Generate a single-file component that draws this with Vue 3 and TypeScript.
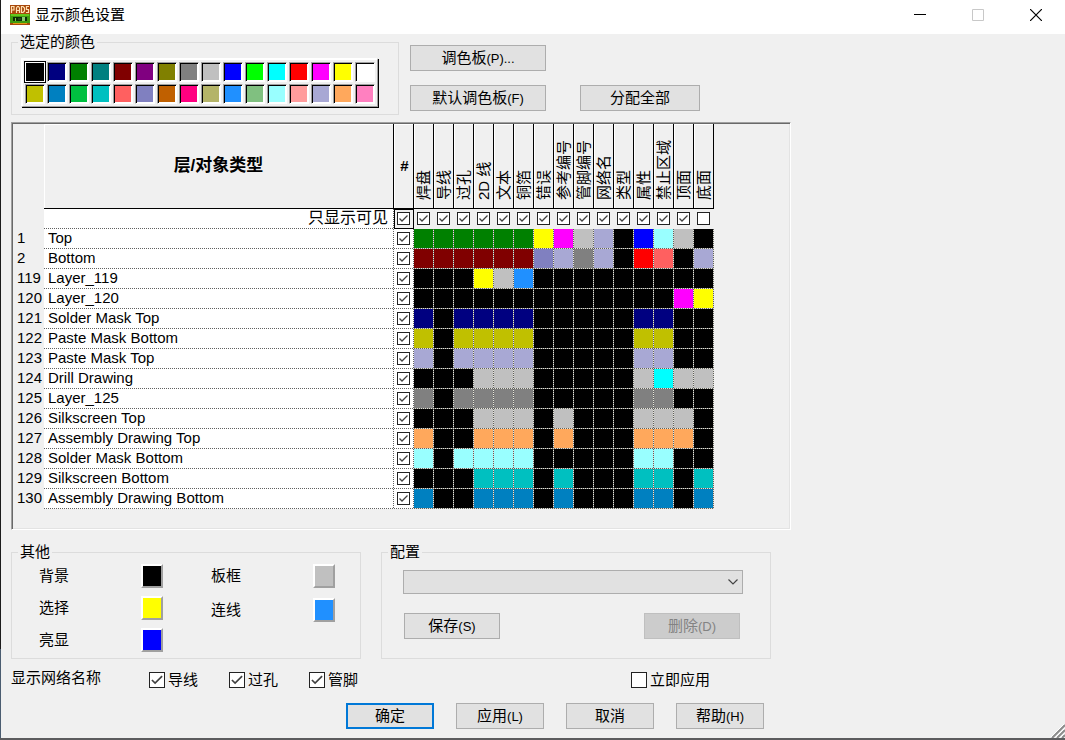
<script setup lang="ts">
import { ref } from 'vue'

const palette: string[] = [
  '#000000', '#000080', '#008000', '#008080', '#800000', '#800080', '#808000', '#808080',
  '#c0c0c0', '#0000ff', '#00ff00', '#00ffff', '#ff0000', '#ff00ff', '#ffff00', '#ffffff',
  '#c0c000', '#0080c0', '#00c040', '#00c0c0', '#ff6060', '#8080c0', '#c06000', '#ff0080',
  '#b4b468', '#2090ff', '#80c080', '#99ffff', '#ff9c9c', '#a8a8d4', '#ffa85c', '#ff80c0',
]
const selected = ref(0)

const columns: string[] = [
  '焊盘', '导线', '过孔', '2D 线', '文本', '铜箔', '错误', '参考编号',
  '管脚编号', '网络名', '类型', '属性', '禁止区域', '顶面', '底面',
]
const columnVisible = ref<boolean[]>(columns.map((_, i) => i < columns.length - 1))
const allVisible = ref(true)

const codes: Record<string, string> = {
  k: '#000000', g: '#008000', m: '#800000', y: '#ffff00', f: '#ff00ff', s: '#c0c0c0',
  l: '#a8a8d4', b: '#0000ff', c: '#99ffff', p: '#8080c0', d: '#808080', r: '#ff0000',
  e: '#ff6060', u: '#2090ff', n: '#000080', o: '#c0c000', a: '#00ffff', w: '#ffa85c',
  t: '#00c0c0', z: '#0080c0',
}

interface Layer {
  id: number
  name: string
  colors: string
  visible: boolean
}

const layers = ref<Layer[]>([
  { id: 1, name: 'Top', colors: 'ggggggyfslkbcsk', visible: true },
  { id: 2, name: 'Bottom', colors: 'mmmmmmpldlkrekl', visible: true },
  { id: 119, name: 'Layer_119', colors: 'kkkysukkkkkkkkk', visible: true },
  { id: 120, name: 'Layer_120', colors: 'kkkkkkkkkkkkkfy', visible: true },
  { id: 121, name: 'Solder Mask Top', colors: 'nknnnnkkkkknnkk', visible: true },
  { id: 122, name: 'Paste Mask Bottom', colors: 'okooookkkkkookk', visible: true },
  { id: 123, name: 'Paste Mask Top', colors: 'lkllllkkkkkllkk', visible: true },
  { id: 124, name: 'Drill Drawing', colors: 'kkkssskkkkksass', visible: true },
  { id: 125, name: 'Layer_125', colors: 'dkddddkkkkkddkk', visible: true },
  { id: 126, name: 'Silkscreen Top', colors: 'kkkssskskkksssk', visible: true },
  { id: 127, name: 'Assembly Drawing Top', colors: 'wkkwwwkwkkkwwwk', visible: true },
  { id: 128, name: 'Solder Mask Bottom', colors: 'ckcccckkkkkcckk', visible: true },
  { id: 129, name: 'Silkscreen Bottom', colors: 'kkktttktkkkttkt', visible: true },
  { id: 130, name: 'Assembly Drawing Bottom', colors: 'zkkzzzkzkkkzzkz', visible: true },
])

const others = [
  [
    { label: '背景', color: '#000000' },
    { label: '选择', color: '#ffff00' },
    { label: '亮显', color: '#0000ff' },
  ],
  [
    { label: '板框', color: '#c0c0c0' },
    { label: '连线', color: '#2090ff' },
  ],
]

const netNames = ref([
  { label: '导线', on: true },
  { label: '过孔', on: true },
  { label: '管脚', on: true },
])
const applyNow = ref(false)
</script>

<template>
  <div class="window">
    <header class="titlebar">
      <svg class="logo" width="20" height="20" viewBox="0 0 20 20" aria-hidden="true">
        <rect width="20" height="20" fill="#a8480c" />
        <rect y="9" width="20" height="9" fill="#3f9a10" />
        <rect x="1" y="9" width="18" height="2" fill="#63c81c" />
        <path d="M1.500 8V1.500h2.500v3.500h-2.500M6.500 8V3l1-1.500h1L9.500 3v5M6.500 5.500h3M11.500 1.500h1.500l1.500 1.500v3L13 7.500h-1.500zM19 1.500h-2.500V4.500H18.500v3h-2.500" fill="none" stroke="#ffe0b0" stroke-width="1.200" />
        <rect x="3" y="12" width="14" height="4" fill="#0c2c08" />
        <rect x="5" y="13" width="1" height="3" fill="#7fd040" />
        <rect x="8" y="13" width="3" height="2" fill="#244818" />
        <rect x="12" y="12" width="3" height="4" fill="#8ccc70" />
        <rect x="3" y="18" width="14" height="1" fill="#e09a10" />
      </svg>
      <h1>显示颜色设置</h1>
      <button class="caption" type="button" aria-label="最小化">
        <svg width="12" height="12" viewBox="0 0 12 12"><path d="M0 5.500h12" stroke="#000" /></svg>
      </button>
      <button class="caption" type="button" aria-label="最大化" disabled>
        <svg width="12" height="12" viewBox="0 0 12 12"><path d="M.5.5h11v11H.5z" fill="none" stroke="#c8c8c8" /></svg>
      </button>
      <button class="caption" type="button" aria-label="关闭">
        <svg width="12" height="12" viewBox="0 0 12 12"><path d="M0 0l12 12M12 0L0 12" stroke="#000" stroke-width="1.200" /></svg>
      </button>
    </header>

    <main>
      <section class="top">
        <fieldset class="group colors">
          <legend>选定的颜色</legend>
          <div class="palette">
            <button
              v-for="(c, i) in palette"
              :key="i"
              type="button"
              class="chip"
              :class="{ active: i === selected }"
              :style="{ backgroundColor: c }"
              :aria-label="c"
              :aria-pressed="i === selected"
              @click="selected = i"
            ></button>
          </div>
        </fieldset>
        <div class="top-actions">
          <button class="btn" type="button">调色板<span class="key">(P)...</span></button>
          <button class="btn second" type="button">默认调色板<span class="key">(F)</span></button>
          <button class="btn second" type="button">分配全部</button>
        </div>
      </section>

      <section class="sheet">
        <table>
          <colgroup>
            <col class="c-id" />
            <col class="c-name" />
            <col v-for="n in 16" :key="n" class="c-cell" />
          </colgroup>
          <thead>
            <tr>
              <td></td>
              <th scope="col" class="title">层/对象类型</th>
              <th scope="col" class="title hash">#</th>
              <th v-for="c in columns" :key="c" scope="col"><span class="turned">{{ c }}</span></th>
            </tr>
          </thead>
          <tbody>
            <tr>
              <td></td>
              <td class="name only">只显示可见</td>
              <td class="check focus"><input v-model="allVisible" type="checkbox" aria-label="只显示可见" /></td>
              <td v-for="(c, i) in columns" :key="c" class="check plain">
                <input v-model="columnVisible[i]" type="checkbox" :aria-label="c" />
              </td>
            </tr>
            <tr v-for="layer in layers" :key="layer.id">
              <th scope="row" class="id">{{ layer.id }}</th>
              <td class="name">{{ layer.name }}</td>
              <td class="check"><input v-model="layer.visible" type="checkbox" :aria-label="layer.name" /></td>
              <td
                v-for="(k, i) in layer.colors"
                :key="i"
                class="cell"
                :style="{ backgroundColor: codes[k] }"
              ></td>
            </tr>
          </tbody>
        </table>
      </section>

      <section class="groups">
        <fieldset class="group">
          <legend>其他</legend>
          <div class="other-columns">
            <div v-for="(col, n) in others" :key="n" class="other-list">
              <label v-for="o in col" :key="o.label" class="other">
                <span>{{ o.label }}</span>
                <button type="button" class="well" :style="{ backgroundColor: o.color }"></button>
              </label>
            </div>
          </div>
        </fieldset>

        <fieldset class="group">
          <legend>配置</legend>
          <div class="config">
            <div class="combo">
              <select aria-label="配置" disabled><option></option></select>
              <svg width="10" height="6" viewBox="0 0 10 6" aria-hidden="true"><path d="M.5.5L5 5 9.500.5" fill="none" stroke="#444" stroke-width="1.200" /></svg>
            </div>
            <div class="config-actions">
              <button class="btn" type="button">保存<span class="key">(S)</span></button>
              <button class="btn" type="button" disabled>删除<span class="key">(D)</span></button>
            </div>
          </div>
        </fieldset>
      </section>

      <section class="options">
        <span class="caption-text">显示网络名称</span>
        <label v-for="n in netNames" :key="n.label" class="option">
          <input v-model="n.on" type="checkbox" />{{ n.label }}
        </label>
        <label class="option now"><input v-model="applyNow" type="checkbox" />立即应用</label>
      </section>

      <footer>
        <button class="btn default" type="button">确定</button>
        <button class="btn" type="button">应用<span class="key">(L)</span></button>
        <button class="btn" type="button">取消</button>
        <button class="btn" type="button">帮助<span class="key">(H)</span></button>
      </footer>
    </main>
    <svg class="grip" width="14" height="14" viewBox="0 0 14 14" aria-hidden="true">
      <path d="M1 14L14 1M6 14l8-8M11 14l3-3" stroke="#8c8c8c" stroke-width="2" />
      <path d="M0 13L13 0M4.500 13.500l9-9M9.500 13.500l4-4" stroke="#fff" />
    </svg>
  </div>
</template>

<style>
body {
  margin: 0;
  background: #f0f0f0;
}
</style>

<style scoped>
.window {
  position: relative;
  box-sizing: border-box;
  min-height: 100vh;
  padding-left: 1px;
  border-bottom: 2px solid #5c5c5e;
  background: linear-gradient(#1c1c1c 0 88%, #4a5c70 88%) 0 0 / 1px 100% no-repeat #f0f0f0;
  color: #000;
  font: 15px/16px "Liberation Sans", "Noto Sans CJK SC", sans-serif;
}

button,
select,
input {
  margin: 0;
  font: inherit;
  color: inherit;
}

.titlebar {
  display: flex;
  align-items: center;
  height: 34px;
  padding-left: 9px;
  box-sizing: border-box;
  background: #fff;
}

.titlebar h1 {
  flex: 1;
  margin: 0 0 4px 5px;
  font-size: 15px;
  font-weight: 400;
}

.logo {
  margin-bottom: 4px;
}

.caption {
  display: grid;
  place-items: center;
  width: 58px;
  height: 30px;
  margin-bottom: 4px;
  padding: 0;
  border: 0;
  background: none;
}

main {
  padding: 0 10px 9px;
}

.group {
  box-sizing: border-box;
  min-width: 0;
  margin: 0;
  padding: 0;
  border: 1px solid #dcdcdc;
}

.group legend {
  height: 16px;
  margin-left: 6px;
  padding: 0 2px;
}

.top {
  display: flex;
  gap: 11px;
}

.palette {
  display: grid;
  grid-template-columns: repeat(16, 20px);
  gap: 2px;
  margin: 8px 20px 7px 9px;
  padding: 2px;
  border: 2px solid;
  border-color: #fff #a0a0a0 #a0a0a0 #fff;
  border-right-width: 1px;
  border-bottom-width: 1px;
  box-shadow: 1px 1px #000;
}

.chip {
  width: 20px;
  height: 20px;
  padding: 0;
  border: 1px solid;
  border-color: #a0a0a0 #fff #fff #a0a0a0;
  box-shadow: inset 1px 1px #000, inset -1px -1px #fff;
}

.chip.active {
  border-color: #fff;
  box-shadow: none;
  outline: 1px solid #000;
}

.top-actions {
  display: grid;
  grid-template-columns: 136px 120px;
  grid-auto-rows: 26px;
  gap: 14px 34px;
  padding-top: 11px;
}

.top-actions .second {
  grid-row: 2;
}

.btn {
  height: 26px;
  padding: 0;
  border: 1px solid #adadad;
  background: #e1e1e1;
  text-align: center;
}

.btn:disabled {
  border-color: #bfbfbf;
  background: #ccc;
  color: #838383;
}

.btn.default {
  border: 2px solid #0078d7;
}

.key {
  font-size: 13px;
}

.sheet {
  margin: 7px 264px 0 0;
  padding: 1px 1px 20px;
  border: 1px solid;
  border-color: #a0a0a0 #fff #fff #a0a0a0;
  box-shadow: inset 1px 1px #696969, inset -1px -1px #e3e3e3;
}

table {
  table-layout: fixed;
  width: 701px;
  border-spacing: 0;
}

.c-id {
  width: 31px;
}

.c-name {
  width: 350px;
}

.c-cell {
  width: 20px;
}

th,
td {
  box-sizing: border-box;
  padding: 0;
}

thead th {
  height: 85px;
  border-right: 1px solid #000;
  border-bottom: 1px solid #000;
  box-shadow: inset 1px 1px #fff;
  font-weight: 400;
  vertical-align: bottom;
}

thead .title {
  font-size: 17px;
  font-weight: 700;
  vertical-align: middle;
}

thead .hash {
  padding-left: 2px;
  font-size: 15px;
}

.turned {
  display: block;
  height: 76px;
  margin: 0 auto 8px;
  line-height: 18px;
  text-align: left;
  writing-mode: vertical-rl;
  text-orientation: sideways;
  transform: rotate(180deg);
  white-space: nowrap;
}

tbody tr {
  height: 20px;
}

.id {
  padding: 0 0 2px 4px;
  font-weight: 400;
  text-align: left;
}

.name,
.check,
.cell {
  --a: #606060;
  --b: #fff;
  height: 20px;
  background-color: #fff;
  background-image:
    repeating-linear-gradient(90deg, var(--a) 0 1px, var(--b) 1px 2px),
    repeating-linear-gradient(var(--a) 0 1px, var(--b) 1px 2px);
  background-position: 0 100%, 100% 0;
  background-size: 100% 1px, 1px 100%;
  background-repeat: no-repeat;
}

.cell {
  --b: #e4e4d8;
}

.name {
  padding: 0 0 2px 4px;
  white-space: nowrap;
}

.name.only {
  padding-right: 6px;
  font-size: 16px;
  text-align: right;
}

.check {
  padding: 3px 4px 4px 3px;
}

.check.plain {
  background: #f0f0f0;
}

.check.focus {
  box-shadow: inset 0 0 0 1px #000;
  background: #f0f0f0;
}

input[type="checkbox"] {
  display: block;
  appearance: none;
  box-sizing: border-box;
  width: 13px;
  height: 13px;
  border: 1px solid #222;
  background: #fff center / 11px 11px no-repeat;
}

input[type="checkbox"]:checked {
  background-image: url("data:image/svg+xml,%3Csvg xmlns='http://www.w3.org/2000/svg' viewBox='0 0 11 11'%3E%3Cpath d='M1.500 5.500L4 8l5.500-5.500' fill='none' stroke='%23404040' stroke-width='1.300'/%3E%3C/svg%3E");
}

.groups {
  display: grid;
  grid-template-columns: 350fr 390fr;
  gap: 20px;
  margin: 14px 284px 0 0;
}

.other-columns {
  display: flex;
  justify-content: space-between;
  padding: 4px 25px 6px 27px;
}

.other-list {
  display: flex;
  flex-direction: column;
  gap: 8px;
  width: 124px;
}

.other-list + .other-list {
  gap: 10px;
}

.other {
  display: flex;
  justify-content: space-between;
  line-height: 24px;
}

.well {
  width: 22px;
  height: 24px;
  padding: 0;
  border: 2px solid;
  border-color: #fff #a0a0a0 #a0a0a0 #fff;
}

.config {
  padding: 10px 27px 19px 21px;
}

.combo {
  display: grid;
  align-items: center;
}

.combo select,
.combo svg {
  grid-area: 1 / 1;
}

.combo select {
  appearance: none;
  width: 100%;
  height: 24px;
  border: 1px solid #adadad;
  border-radius: 0;
  background: #e1e1e1;
  opacity: 1;
}

.combo svg {
  justify-self: end;
  margin-right: 5px;
  pointer-events: none;
}

.config-actions {
  display: flex;
  justify-content: space-between;
  margin: 19px 3px 0 1px;
}

.config-actions .btn {
  width: 96px;
}

.options {
  display: flex;
  margin-top: 13px;
  height: 16px;
}

.caption-text {
  width: 138px;
  line-height: 12px;
}

.option {
  display: flex;
  gap: 3px;
  width: 80px;
}

.option input[type="checkbox"] {
  width: 16px;
  height: 16px;
  background-size: 14px 14px;
}

.option.now {
  width: auto;
  margin-left: 242px;
}

footer {
  display: flex;
  gap: 22px;
  margin: 15px 0 0 335px;
}

footer .btn {
  width: 88px;
}

.grip {
  position: absolute;
  right: 0;
  bottom: 0;
}
</style>
